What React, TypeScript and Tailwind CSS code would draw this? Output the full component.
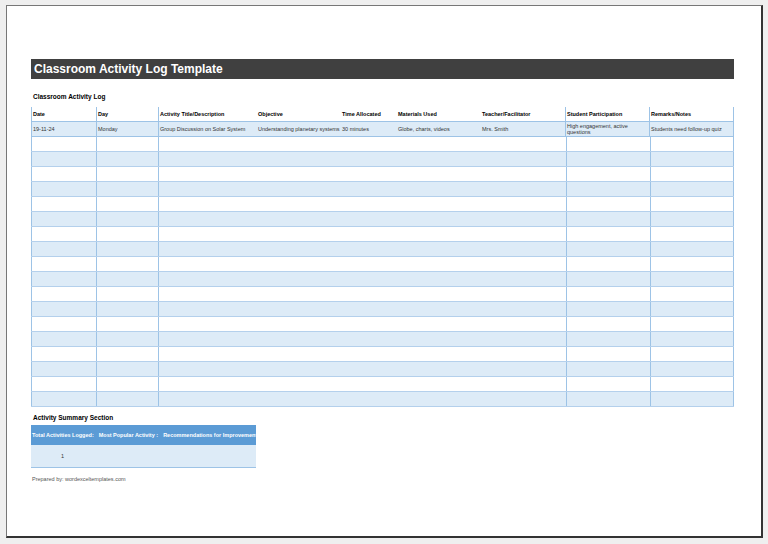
export default function App() {
  const rows = Array.from({ length: 18 });
  const cell = "border-l border-[#9dc3e6] h-full";
  return (
    <div className="w-[768px] h-[544px] bg-[#efefef] pt-[5px] pl-[6px]" style={{ fontFamily: '"Liberation Sans", Arial, sans-serif' }}>
      <div className="w-[757px] h-[533px] bg-white border border-[#777] border-r-2 border-b-2 border-r-[#333] border-b-[#333] pt-[53px] pl-[24px]">
        <div className="w-[703px] h-[20px] bg-[#404040] text-white font-bold text-[12px] flex items-center pl-[3px]">
          Classroom Activity Log Template
        </div>
        <div className="mt-[13px] text-[6.5px] font-bold text-black pl-[2px] h-[15px]">Classroom Activity Log</div>
        <div className="w-[703px] text-[5.5px] text-[#333]">
          <div className="grid grid-cols-[65px_62px_99px_84px_56px_84px_84px_84px_85px] h-[15px] border-b border-[#9dc3e6] font-bold text-black items-center">
            <div className={`${cell} pl-[1px] flex items-center`}>Date</div>
            <div className={`${cell} pl-[1px] flex items-center`}>Day</div>
            <div className={`${cell} pl-[1px] flex items-center`}>Activity Title/Description</div>
            <div className="pl-[1px]">Objective</div>
            <div className="pl-[1px]">Time Allocated</div>
            <div className="pl-[1px]">Materials Used</div>
            <div className="pl-[1px]">Teacher/Facilitator</div>
            <div className={`${cell} pl-[1px] flex items-center`}>Student Participation</div>
            <div className={`${cell} pl-[1px] flex items-center border-r`}>Remarks/Notes</div>
          </div>
          <div className="grid grid-cols-[65px_62px_99px_84px_56px_84px_84px_84px_85px] h-[15px] bg-[#ddebf7] border-b border-[#9dc3e6] items-center">
            <div className={`${cell} pl-[1px] flex items-center`}>19-11-24</div>
            <div className={`${cell} pl-[1px] flex items-center`}>Monday</div>
            <div className={`${cell} pl-[1px] flex items-center`}>Group Discussion on Solar System</div>
            <div className="pl-[1px] whitespace-nowrap">Understanding planetary systems</div>
            <div className="pl-[1px]">30 minutes</div>
            <div className="pl-[1px]">Globe, charts, videos</div>
            <div className="pl-[1px]">Mrs. Smith</div>
            <div className={`${cell} pl-[1px] flex items-center leading-[6px]`}>High engagement, active questions</div>
            <div className={`${cell} pl-[1px] flex items-center border-r`}>Students need follow-up quiz</div>
          </div>
          {rows.map((_, i) => (
            <div key={i} className={`grid grid-cols-[65px_62px_408px_84px_84px] h-[15px] border-b border-[#b4d0ec] ${i % 2 === 1 ? "bg-[#ddebf7]" : "bg-white"}`}>
              <div className={cell} />
              <div className={cell} />
              <div className={cell} />
              <div className={cell} />
              <div className={`${cell} border-r`} />
            </div>
          ))}
        </div>
        <div className="mt-[6px] text-[6.5px] font-bold text-black pl-[2px] h-[12px]">Activity Summary Section</div>
        <div className="w-[225px] text-[5.5px]">
          <div className="h-[20px] bg-[#5b9bd5] text-white font-bold flex items-center gap-[5px] pl-[1px] whitespace-nowrap">
            <span>Total Activities Logged:</span>
            <span>Most Popular Activity :</span>
            <span>Recommendations for Improvement:</span>
          </div>
          <div className="h-[23px] bg-[#ddebf7] border-b border-[#9dc3e6] flex items-center pl-[30px] text-[#333]">1</div>
        </div>
        <div className="mt-[7px] text-[5.5px] text-[#555] pl-[1px]">Prepared by: wordexceltemplates.com</div>
      </div>
    </div>
  );
}
